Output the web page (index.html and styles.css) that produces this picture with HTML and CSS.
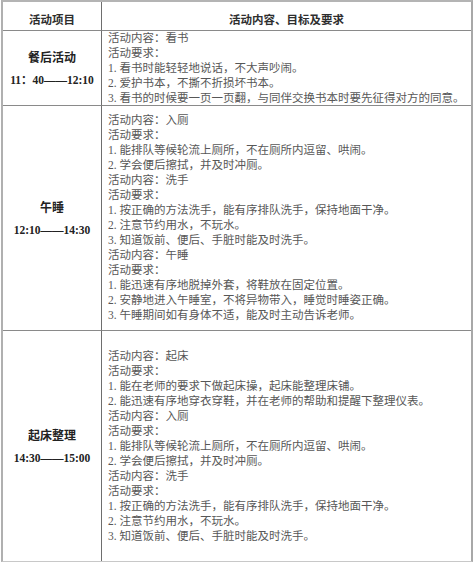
FILE: index.html
```html
<!DOCTYPE html>
<html lang="zh-CN">
<head>
<meta charset="utf-8">
<title>活动安排</title>
<link rel="stylesheet" href="styles.css">
</head>
<body>
<div class="sheet">
  <div class="cell head left">活动项目</div>
  <div class="cell head right">活动内容、目标及要求</div>

  <div class="cell label left">
    <div>餐后活动</div>
    <div class="time">11：40——12:10</div>
  </div>
  <div class="cell content right">
    <div>活动内容：看书</div>
    <div>活动要求：</div>
    <div>1. 看书时能轻轻地说话，不大声吵闹。</div>
    <div>2. 爱护书本，不撕不折损坏书本。</div>
    <div>3. 看书的时候要一页一页翻，与同伴交换书本时要先征得对方的同意。</div>
  </div>

  <div class="cell label left">
    <div>午睡</div>
    <div class="time">12:10——14:30</div>
  </div>
  <div class="cell content right">
    <div>活动内容：入厕</div>
    <div>活动要求：</div>
    <div>1. 能排队等候轮流上厕所，不在厕所内逗留、哄闹。</div>
    <div>2. 学会便后擦拭，并及时冲厕。</div>
    <div>活动内容：洗手</div>
    <div>活动要求：</div>
    <div>1. 按正确的方法洗手，能有序排队洗手，保持地面干净。</div>
    <div>2. 注意节约用水，不玩水。</div>
    <div>3. 知道饭前、便后、手脏时能及时洗手。</div>
    <div>活动内容：午睡</div>
    <div>活动要求：</div>
    <div>1. 能迅速有序地脱掉外套，将鞋放在固定位置。</div>
    <div>2. 安静地进入午睡室，不将异物带入，睡觉时睡姿正确。</div>
    <div>3. 午睡期间如有身体不适，能及时主动告诉老师。</div>
  </div>

  <div class="cell label left last">
    <div>起床整理</div>
    <div class="time">14:30——15:00</div>
  </div>
  <div class="cell content right last">
    <div>活动内容：起床</div>
    <div>活动要求：</div>
    <div>1. 能在老师的要求下做起床操，起床能整理床铺。</div>
    <div>2. 能迅速有序地穿衣穿鞋，并在老师的帮助和提醒下整理仪表。</div>
    <div>活动内容：入厕</div>
    <div>活动要求：</div>
    <div>1. 能排队等候轮流上厕所，不在厕所内逗留、哄闹。</div>
    <div>2. 学会便后擦拭，并及时冲厕。</div>
    <div>活动内容：洗手</div>
    <div>活动要求：</div>
    <div>1. 按正确的方法洗手，能有序排队洗手，保持地面干净。</div>
    <div>2. 注意节约用水，不玩水。</div>
    <div>3. 知道饭前、便后、手脏时能及时洗手。</div>
  </div>
</div>
</body>
</html>
```

FILE: styles.css
```css
html, body {
  margin: 0;
  padding: 0;
  background: #ffffff;
}

.sheet {
  box-sizing: border-box;
  margin: 0 0 0 1px;
  width: 472px;
  display: grid;
  grid-template-columns: 99px 369px;
  grid-template-rows: 29px 75px 225px 230px;
  border-top: 2px solid #b4b4b4;
  border-left: 2px solid #b0b0b0;
  border-right: 2px solid #a8a8a8;
  border-bottom: 1px solid #c8c8c8;
  font-family: "Liberation Serif", "Noto Sans CJK SC", serif;
}

.cell {
  box-sizing: border-box;
  border-bottom: 1px solid #8a8a8a;
}

.cell.last {
  border-bottom: none;
}

.left {
  border-right: 1px solid #6e6e6e;
}

.head {
  display: flex;
  align-items: center;
  justify-content: center;
  padding-top: 6px;
  font-size: 11.5px;
  font-weight: 700;
  color: #2e2e2e;
}

.label {
  display: flex;
  flex-direction: column;
  align-items: center;
  justify-content: center;
  font-size: 12px;
  line-height: 22px;
  font-weight: 700;
  color: #222222;
  padding-top: 1px;
}

.time {
  font-size: 11.5px;
}

.content {
  display: flex;
  flex-direction: column;
  justify-content: center;
  padding-left: 6px;
  font-size: 11.5px;
  line-height: 15px;
  font-weight: 400;
  color: #575757;
  white-space: nowrap;
}
```
